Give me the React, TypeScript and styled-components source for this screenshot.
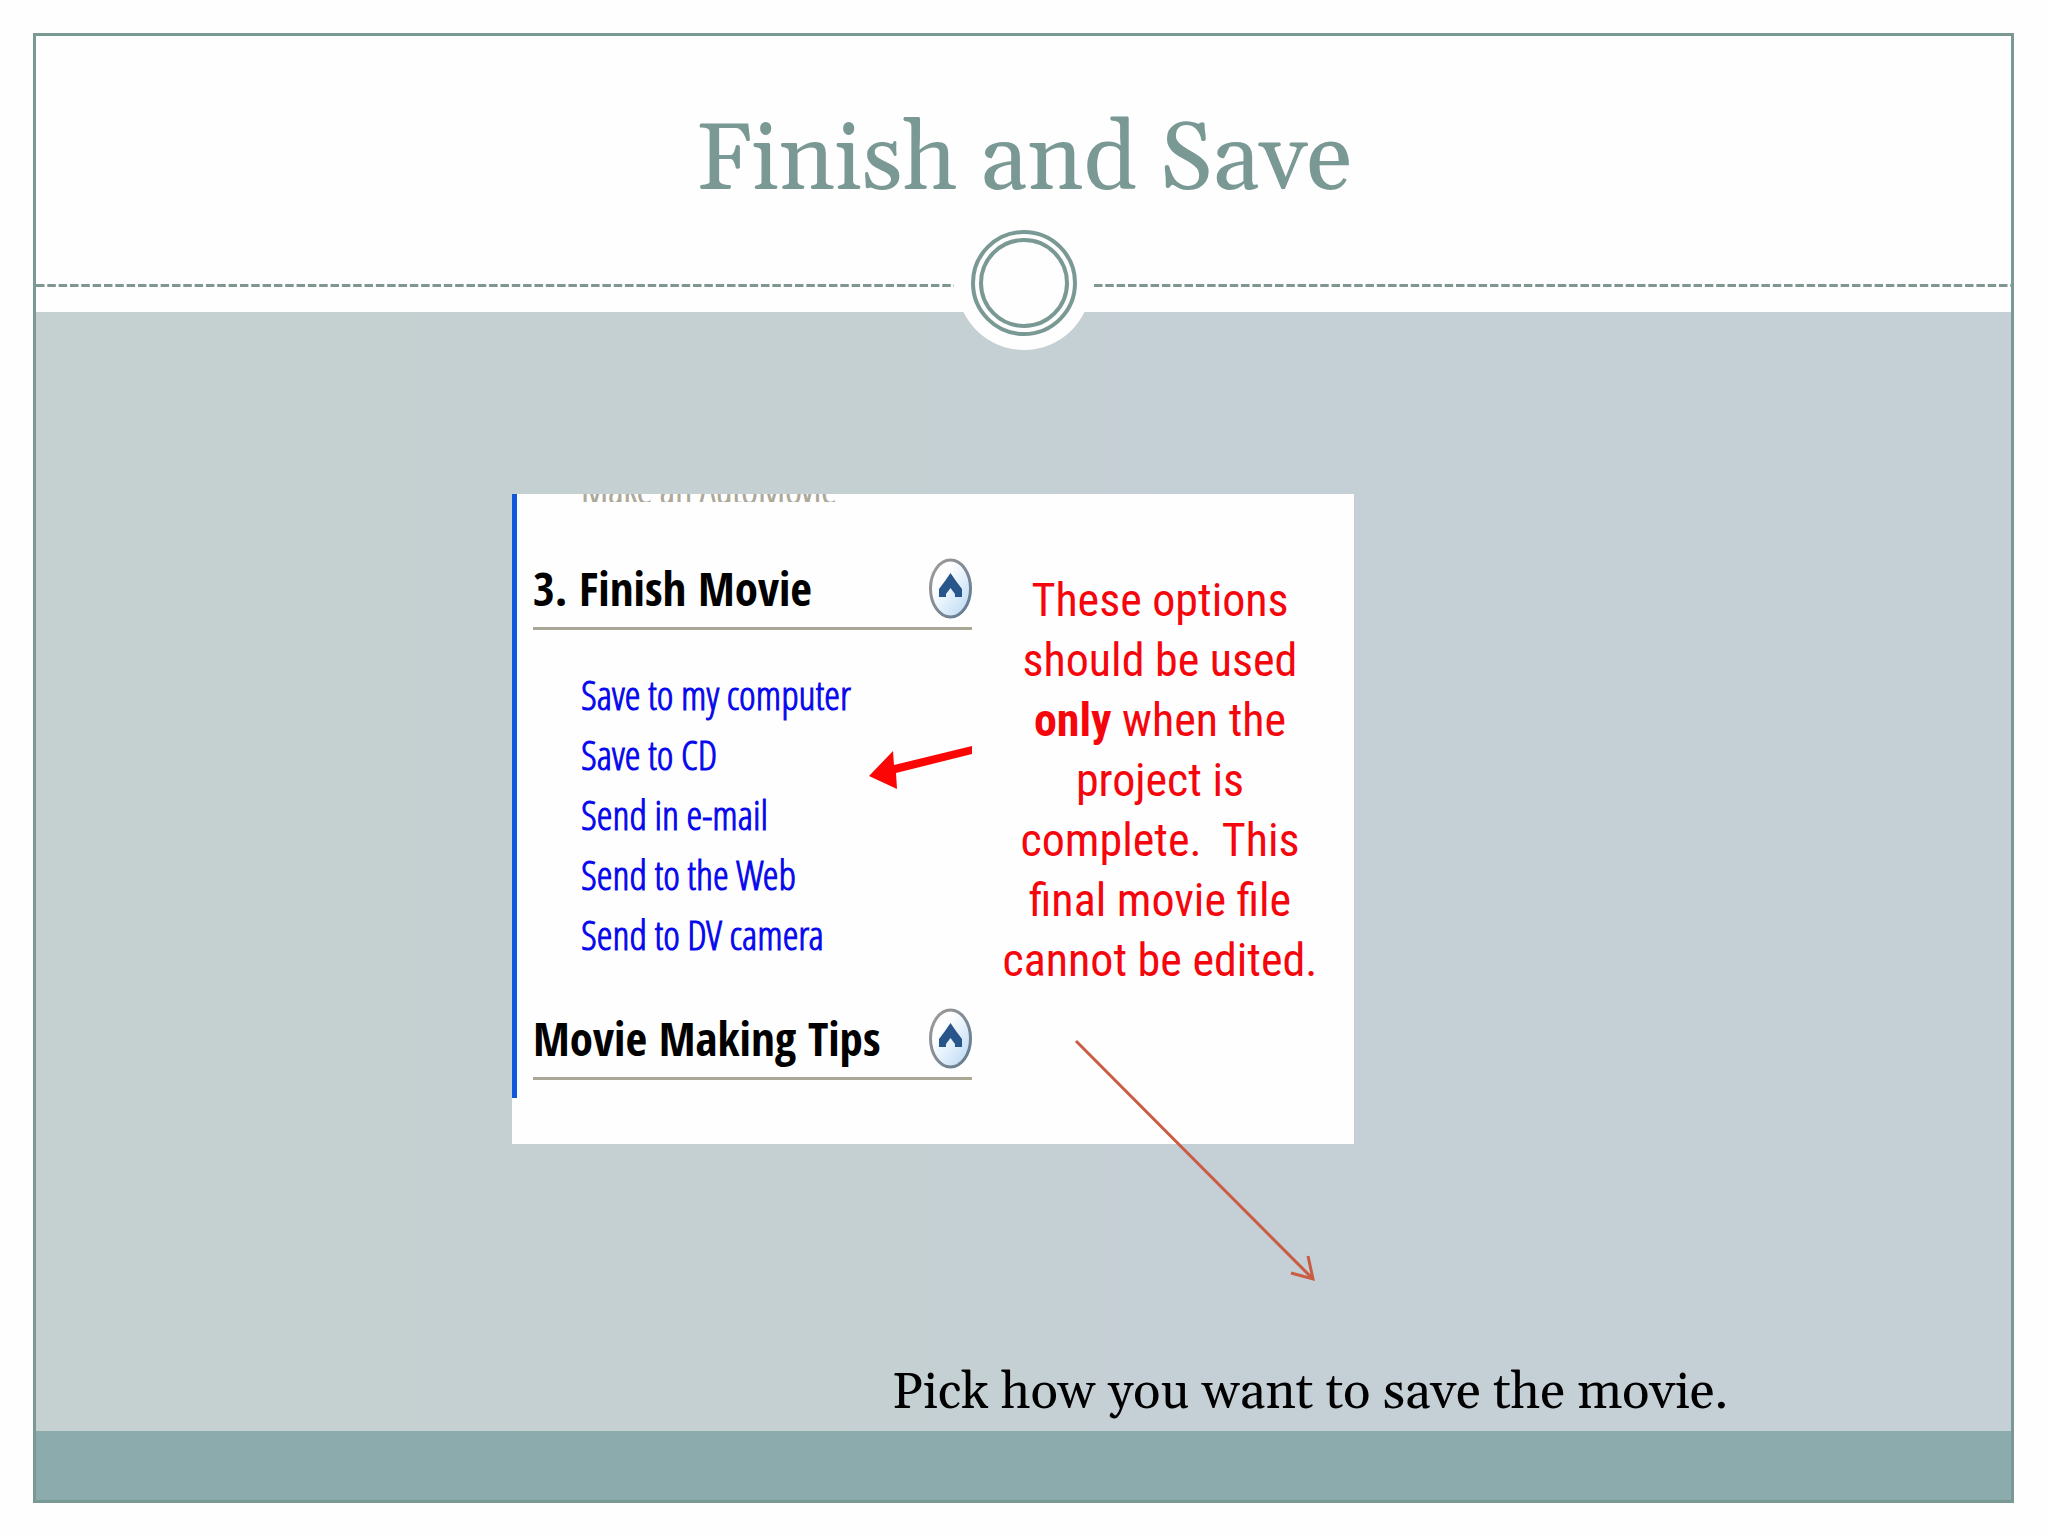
import React from "react";
import styled, { createGlobalStyle } from "styled-components";

const teal = "#7a9994";
const serif = `Georgia, Gelasio, "Liberation Serif", "Times New Roman", serif`;
const condensed = `"Roboto Condensed", "DejaVu Sans Condensed", sans-serif`;
const tight = `"Open Sans Condensed", "Roboto Condensed", "DejaVu Sans Condensed", sans-serif`;
const tightLight = `"Open Sans Condensed Light", "Roboto Condensed", "DejaVu Sans Condensed", sans-serif`;

const GlobalStyle = createGlobalStyle`
  *, *::before { box-sizing: border-box; }
  body { margin: 0; background: #fefefe; }
  h1, h2, p, ul { margin: 0; padding: 0; }
`;

const Page = styled.div`
  min-height: 100vh;
  padding: 33px 34px 33px 33px;
  display: flex;
`;

const Slide = styled.main`
  flex: 1;
  display: flex;
  flex-direction: column;
  border: 3px solid ${teal};
  background: #fefefe;
`;

const Title = styled.h1`
  height: 180px;
  padding-top: 68px;
  font: 400 94px/116px ${serif};
  color: ${teal};
  text-align: center;
`;

const Divider = styled.div`
  display: flex;
  align-items: center;
  gap: 3px;
  margin-bottom: -38px;
  position: relative;
  z-index: 1;
`;

const DashedLine = styled.div`
  flex: 1;
  height: 8px;
  background: linear-gradient(90deg, #7f9692 72%, transparent 72%) left bottom /
    calc(100% / 81) 3px repeat-x;
`;

const Badge = styled.div`
  display: grid;
  place-items: center;
  width: 134px;
  height: 134px;
  border-radius: 50%;
  background: #fefefe;
`;

const Ring = styled.div`
  display: grid;
  place-items: center;
  width: 106px;
  height: 106px;
  border: 4px solid ${teal};
  border-radius: 50%;

  &::before {
    content: "";
    width: 90px;
    height: 90px;
    border: 4px solid ${teal};
    border-radius: 50%;
  }
`;

const Body = styled.section`
  flex: 1;
  display: flex;
  flex-direction: column;
  align-items: flex-start;
  padding: 182px 0 0 476px;
  background: linear-gradient(
    90deg,
    #c5d0d0 0%,
    #c5d0d2 26%,
    #c5d0d4 52%,
    #c5cfd6 56%,
    #c5cfd6 100%
  );
`;

const Panel = styled.div`
  position: relative;
  display: grid;
  grid-template-columns: 460px 382px;
  padding-bottom: 46px;
  background: #fefefe;
`;

const TaskPane = styled.nav`
  padding: 0 0 18px 16px;
  border-left: 5px solid #0f57dd;
`;

const CutOff = styled.div`
  display: flex;
  align-items: flex-end;
  height: 8px;
  padding-left: 48px;
  overflow: hidden;
  font: 400 40px/26px ${tightLight};
  -webkit-text-stroke: 1px #aca899;
  white-space: nowrap;
  color: #aca899;
`;

const GroupHeader = styled.div<{ $gap: number }>`
  display: flex;
  align-items: center;
  justify-content: space-between;
  margin-top: ${(p) => p.$gap}px;
  padding-bottom: 8px;
  border-bottom: 3px solid #a9a896;
`;

const GroupTitle = styled.h2`
  font: 700 47px/61px ${tight};
  color: #000;
  white-space: nowrap;
`;

const CollapseButton = styled.button`
  width: 43px;
  height: 61px;
  padding: 0;
  border: 0;
  background: none;

  svg {
    display: block;
  }
`;

const Options = styled.div`
  display: flex;
  justify-content: space-between;
  margin-top: 35px;
  padding-left: 48px;

  svg {
    flex: none;
    margin-top: 80px;
  }
`;

const OptionList = styled.ul`
  list-style: none;
`;

const Option = styled.li`
  font: 400 40px/60px ${tightLight};
  white-space: nowrap;

  a {
    color: #0606ee;
    -webkit-text-stroke: 1px #0606ee;
    text-decoration: none;
  }
`;

const Note = styled.p`
  padding: 76px 6px 0 0;
  font: 400 46px/60px ${condensed};
  color: #f5060c;
  text-align: center;
  white-space: pre;
`;

const Pointer = styled.svg`
  position: absolute;
  left: 560px;
  top: 543px;
`;

const Caption = styled.p`
  margin-top: auto;
  padding: 0 0 6px 380px;
  font: 400 51px/64px ${serif};
  color: #000;
`;

const Footer = styled.footer`
  height: 69px;
  background: #8cabac;
`;

function Chevron({ id }: { id: string }) {
  return (
    <svg width="43" height="61" viewBox="0 0 43 61" aria-hidden="true">
      <defs>
        <linearGradient id={id} x1="0" y1="0" x2="1" y2="1">
          <stop offset="0.3" stopColor="#ffffff" />
          <stop offset="0.75" stopColor="#cfe5f8" />
          <stop offset="1" stopColor="#b4d3ef" />
        </linearGradient>
        <linearGradient id={`${id}-edge`} x1="0" y1="0" x2="1" y2="1">
          <stop offset="0" stopColor="#a29c9a" />
          <stop offset="1" stopColor="#5f7990" />
        </linearGradient>
      </defs>
      <ellipse cx="21.500" cy="30.500" rx="20" ry="28.500" fill={`url(#${id})`} stroke={`url(#${id}-edge)`} strokeWidth="3" />
      <path d="M10 39V31L16 23L21.500 15L27 23L33 31V39H26V36L21.500 30L17 36V39Z" fill="#28558a" />
    </svg>
  );
}

const options = [
  "Save to my computer",
  "Save to CD",
  "Send in e-mail",
  "Send to the Web",
  "Send to DV camera",
];

export default function App() {
  return (
    <>
      <GlobalStyle />
      <Page>
        <Slide>
          <Title>Finish and Save</Title>
          <Divider>
            <DashedLine />
            <Badge>
              <Ring />
            </Badge>
            <DashedLine />
          </Divider>
          <Body>
            <Panel>
              <TaskPane>
                <CutOff>Make an AutoMovie</CutOff>
                <GroupHeader $gap={56}>
                  <GroupTitle>3. Finish Movie</GroupTitle>
                  <CollapseButton aria-label="Collapse Finish Movie">
                    <Chevron id="finish" />
                  </CollapseButton>
                </GroupHeader>
                <Options>
                  <OptionList>
                    {options.map((label) => (
                      <Option key={label}>
                        <a href="#">{label}</a>
                      </Option>
                    ))}
                  </OptionList>
                  <svg width="103" height="46" viewBox="0 0 103 46" aria-hidden="true">
                    <path d="M103 1L25 20L24 6L0 31L28 44L27 28L103 9Z" fill="#fb0505" />
                  </svg>
                </Options>
                <GroupHeader $gap={43}>
                  <GroupTitle>Movie Making Tips</GroupTitle>
                  <CollapseButton aria-label="Collapse Movie Making Tips">
                    <Chevron id="tips" />
                  </CollapseButton>
                </GroupHeader>
              </TaskPane>
              <Note>
                {"These options\nshould be used\n"}
                <b>only</b>
                {" when the\nproject is\ncomplete.  This\nfinal movie file\ncannot be edited."}
              </Note>
              <Pointer width="250" height="250" viewBox="0 0 250 250" fill="none" stroke="#cb5c44" strokeWidth="3" aria-hidden="true">
                <path d="M4 4L241 242M219 236L241 242L236 219" />
              </Pointer>
            </Panel>
            <Caption>Pick how you want to save the movie.</Caption>
          </Body>
          <Footer />
        </Slide>
      </Page>
    </>
  );
}
